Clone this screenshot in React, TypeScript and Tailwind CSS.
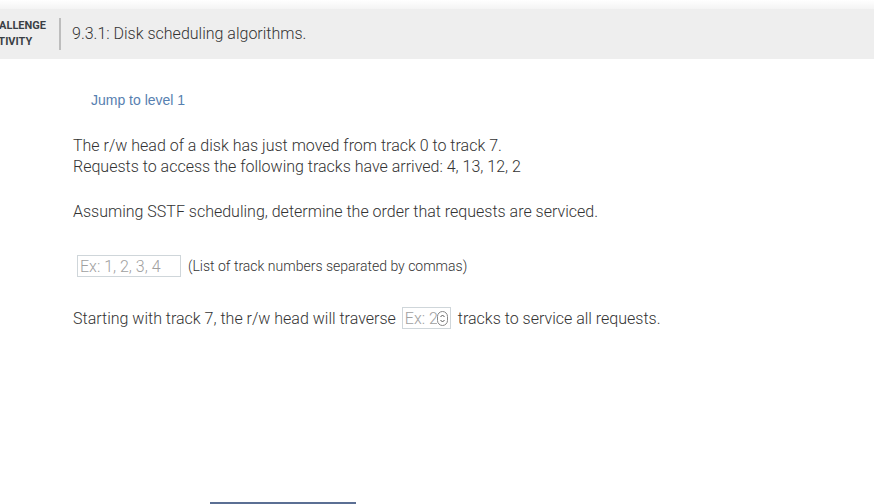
export default function App() {
  return (
    <div className="relative h-[504px] w-[874px] overflow-hidden bg-white font-['Roboto',sans-serif] font-light text-[#333]">
      <div className="h-[9px] bg-gradient-to-b from-white to-[#f4f4f4]" />
      <header className="flex h-[50px] items-center bg-[#eeeeee]">
        <div className="-ml-[16px] w-[62px] text-[11px] font-bold leading-[16px] text-[#3a3f45]">
          <div>CHALLENGE</div>
          <div>ACTIVITY</div>
        </div>
        <div className="ml-[13px] h-[32px] w-[2px] bg-[#bdbdbd]" />
        <h1 className="ml-[11px] text-[16px] font-light text-[#333]">9.3.1: Disk scheduling algorithms.</h1>
      </header>

      <div className="pl-[91px] pt-[29px]">
        <span className="font-['Liberation_Sans',sans-serif] text-[14px] font-normal text-[#5780b0]">Jump to level 1</span>
      </div>

      <div className="pl-[73px] pt-[23px] text-[16px] leading-[21px]">
        <p>The r/w head of a disk has just moved from track 0 to track 7.</p>
        <p>Requests to access the following tracks have arrived: 4, 13, 12, 2</p>
        <p className="mt-[24px]">Assuming SSTF scheduling, determine the order that requests are serviced.</p>

        <div className="mt-[33px] flex items-center pl-[4px]">
          <input
            className="h-[22px] w-[104px] border border-[#cfd6da] px-[2px] text-[16px] font-light text-[#333] outline-none placeholder:text-[#a0a0a0]"
            placeholder="Ex: 1, 2, 3, 4"
          />
          <span className="ml-[7px] text-[14px]">(List of track numbers separated by commas)</span>
        </div>

        <div className="mt-[30px] flex items-center">
          <span>Starting with track 7, the r/w head will traverse</span>
          <div className="relative ml-[6px] flex h-[22px] w-[49px] shrink-0 items-center overflow-hidden border border-[#cfd6da] pl-[2px]">
            <span className="whitespace-nowrap text-[16px] text-[#a0a0a0]">Ex: 2</span>
            <svg width="11" height="15" viewBox="0 0 11 15" className="absolute right-[2px] top-[3px] bg-white">
              <rect x="0.5" y="0.5" width="10" height="14" rx="5" fill="white" stroke="#888" />
              <path d="M3.5 6 L5.5 4 L7.5 6" fill="none" stroke="#555" strokeWidth="1" />
              <path d="M3.5 9 L5.5 11 L7.5 9" fill="none" stroke="#555" strokeWidth="1" />
            </svg>
          </div>
          <span className="ml-[7px]">tracks to service all requests.</span>
        </div>
      </div>

      <div className="absolute bottom-0 left-[210px] h-[2px] w-[146px] bg-[#5b6f94]" />
    </div>
  );
}
